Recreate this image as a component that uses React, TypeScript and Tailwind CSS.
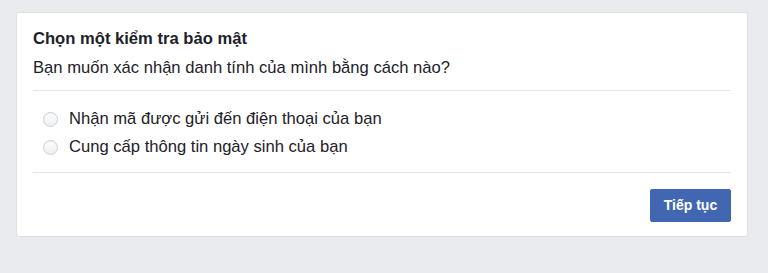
const options = [
  "Nhận mã được gửi đến điện thoại của bạn",
  "Cung cấp thông tin ngày sinh của bạn",
];

const Radio = () => (
  <span className="w-[15px] h-[15px] rounded-full border border-[#ccd0d5] bg-gradient-to-b from-[#ffffff] to-[#eceef1] shadow-[inset_0_1px_1px_rgba(0,0,0,0.05)] shrink-0" />
);

export default function App() {
  return (
    <div className="min-h-[273px] bg-[#e9ebee] pt-3 px-4 font-['Liberation_Sans',Arial,sans-serif] text-[#1d2129]">
      <div className="w-[732px] bg-white border border-[#dddfe2] rounded-[3px] px-4">
        <div className="pt-[15px] pb-[12px] border-b border-[#e5e5e5]">
          <h2 className="text-[16.6px] leading-[21px] font-bold">Chọn một kiểm tra bảo mật</h2>
          <p className="mt-[8px] text-[16.6px] leading-[21px] text-[#1d2129]">
            Bạn muốn xác nhận danh tính của mình bằng cách nào?
          </p>
        </div>
        <div className="pt-[14px] pb-[11px] pl-[10px] border-b border-[#e5e5e5]">
          {options.map((o) => (
            <label key={o} className="flex items-center gap-[11px] h-[28px] text-[16.6px] text-[#1d2129]">
              <Radio />
              <span>{o}</span>
            </label>
          ))}
        </div>
        <div className="flex justify-end pt-4 pb-[14px]">
          <button className="w-[81px] h-[33px] flex items-center justify-center bg-[#4267b2] border border-[#4267b2] rounded-[2px] text-white text-[14px] font-bold">
            Tiếp tục
          </button>
        </div>
      </div>
    </div>
  );
}
